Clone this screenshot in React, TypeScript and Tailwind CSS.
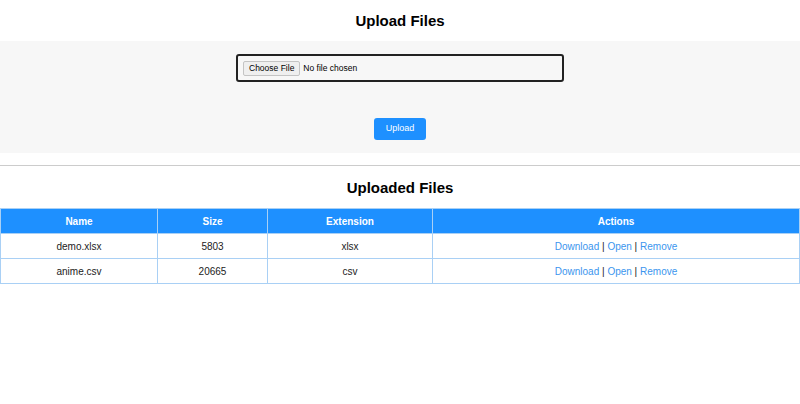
import React from "react";

const files = [
  { name: "demo.xlsx", size: 5803, ext: "xlsx" },
  { name: "anime.csv", size: 20665, ext: "csv" },
];

export default function App() {
  return (
    <div className="min-h-screen bg-white text-black font-['Liberation_Sans',Arial,sans-serif]">
      {/* upload form */}
      <h2 className="text-center text-[15px] font-bold leading-[17px] py-[12px]">Upload Files</h2>
      <div className="bg-[#f7f7f7] pt-[13px] pb-[13px] flex flex-col items-center">
        <div className="w-[328px] h-[28px] border-2 border-[#222] rounded-[3px] flex items-center px-[5px]">
          <input
            type="file"
            className="text-[8.5px] text-black file:text-[8.5px] file:bg-[#efefef] file:border file:border-[#c4c4c4] file:rounded-[2px] file:px-[5px] file:py-[0px] file:mr-[3px] file:h-[15px] file:text-black"
          />
        </div>
        <button className="mt-[36px] h-[22px] px-[12px] bg-[#1e90ff] text-white text-[9px] rounded-[3px]">
          Upload
        </button>
      </div>

      <hr className="mt-[12px] border-0 border-t border-[#cccccc]" />

      {/* file list */}
      <h2 className="text-center text-[15px] font-bold leading-[17px] pt-[13px] pb-[12px]">Uploaded Files</h2>
      <table className="w-full border-collapse table-fixed text-[10px]">
        <colgroup>
          <col className="w-[157px]" />
          <col className="w-[110px]" />
          <col className="w-[165px]" />
          <col />
        </colgroup>
        <thead>
          <tr className="bg-[#1e90ff] text-white h-[25px]">
            <th className="font-bold border border-[#a9d0f5]">Name</th>
            <th className="font-bold border border-[#a9d0f5]">Size</th>
            <th className="font-bold border border-[#a9d0f5]">Extension</th>
            <th className="font-bold border border-[#a9d0f5]">Actions</th>
          </tr>
        </thead>
        <tbody>
          {files.map((f) => (
            <tr key={f.name} className="h-[25px] text-center text-[#222]">
              <td className="border border-[#a9d0f5]">{f.name}</td>
              <td className="border border-[#a9d0f5]">{f.size}</td>
              <td className="border border-[#a9d0f5]">{f.ext}</td>
              <td className="border border-[#a9d0f5]">
                <a href="#" className="text-[#3b95ee]">Download</a> |{" "}
                <a href="#" className="text-[#3b95ee]">Open</a> |{" "}
                <a href="#" className="text-[#3b95ee]">Remove</a>
              </td>
            </tr>
          ))}
        </tbody>
      </table>
    </div>
  );
}
